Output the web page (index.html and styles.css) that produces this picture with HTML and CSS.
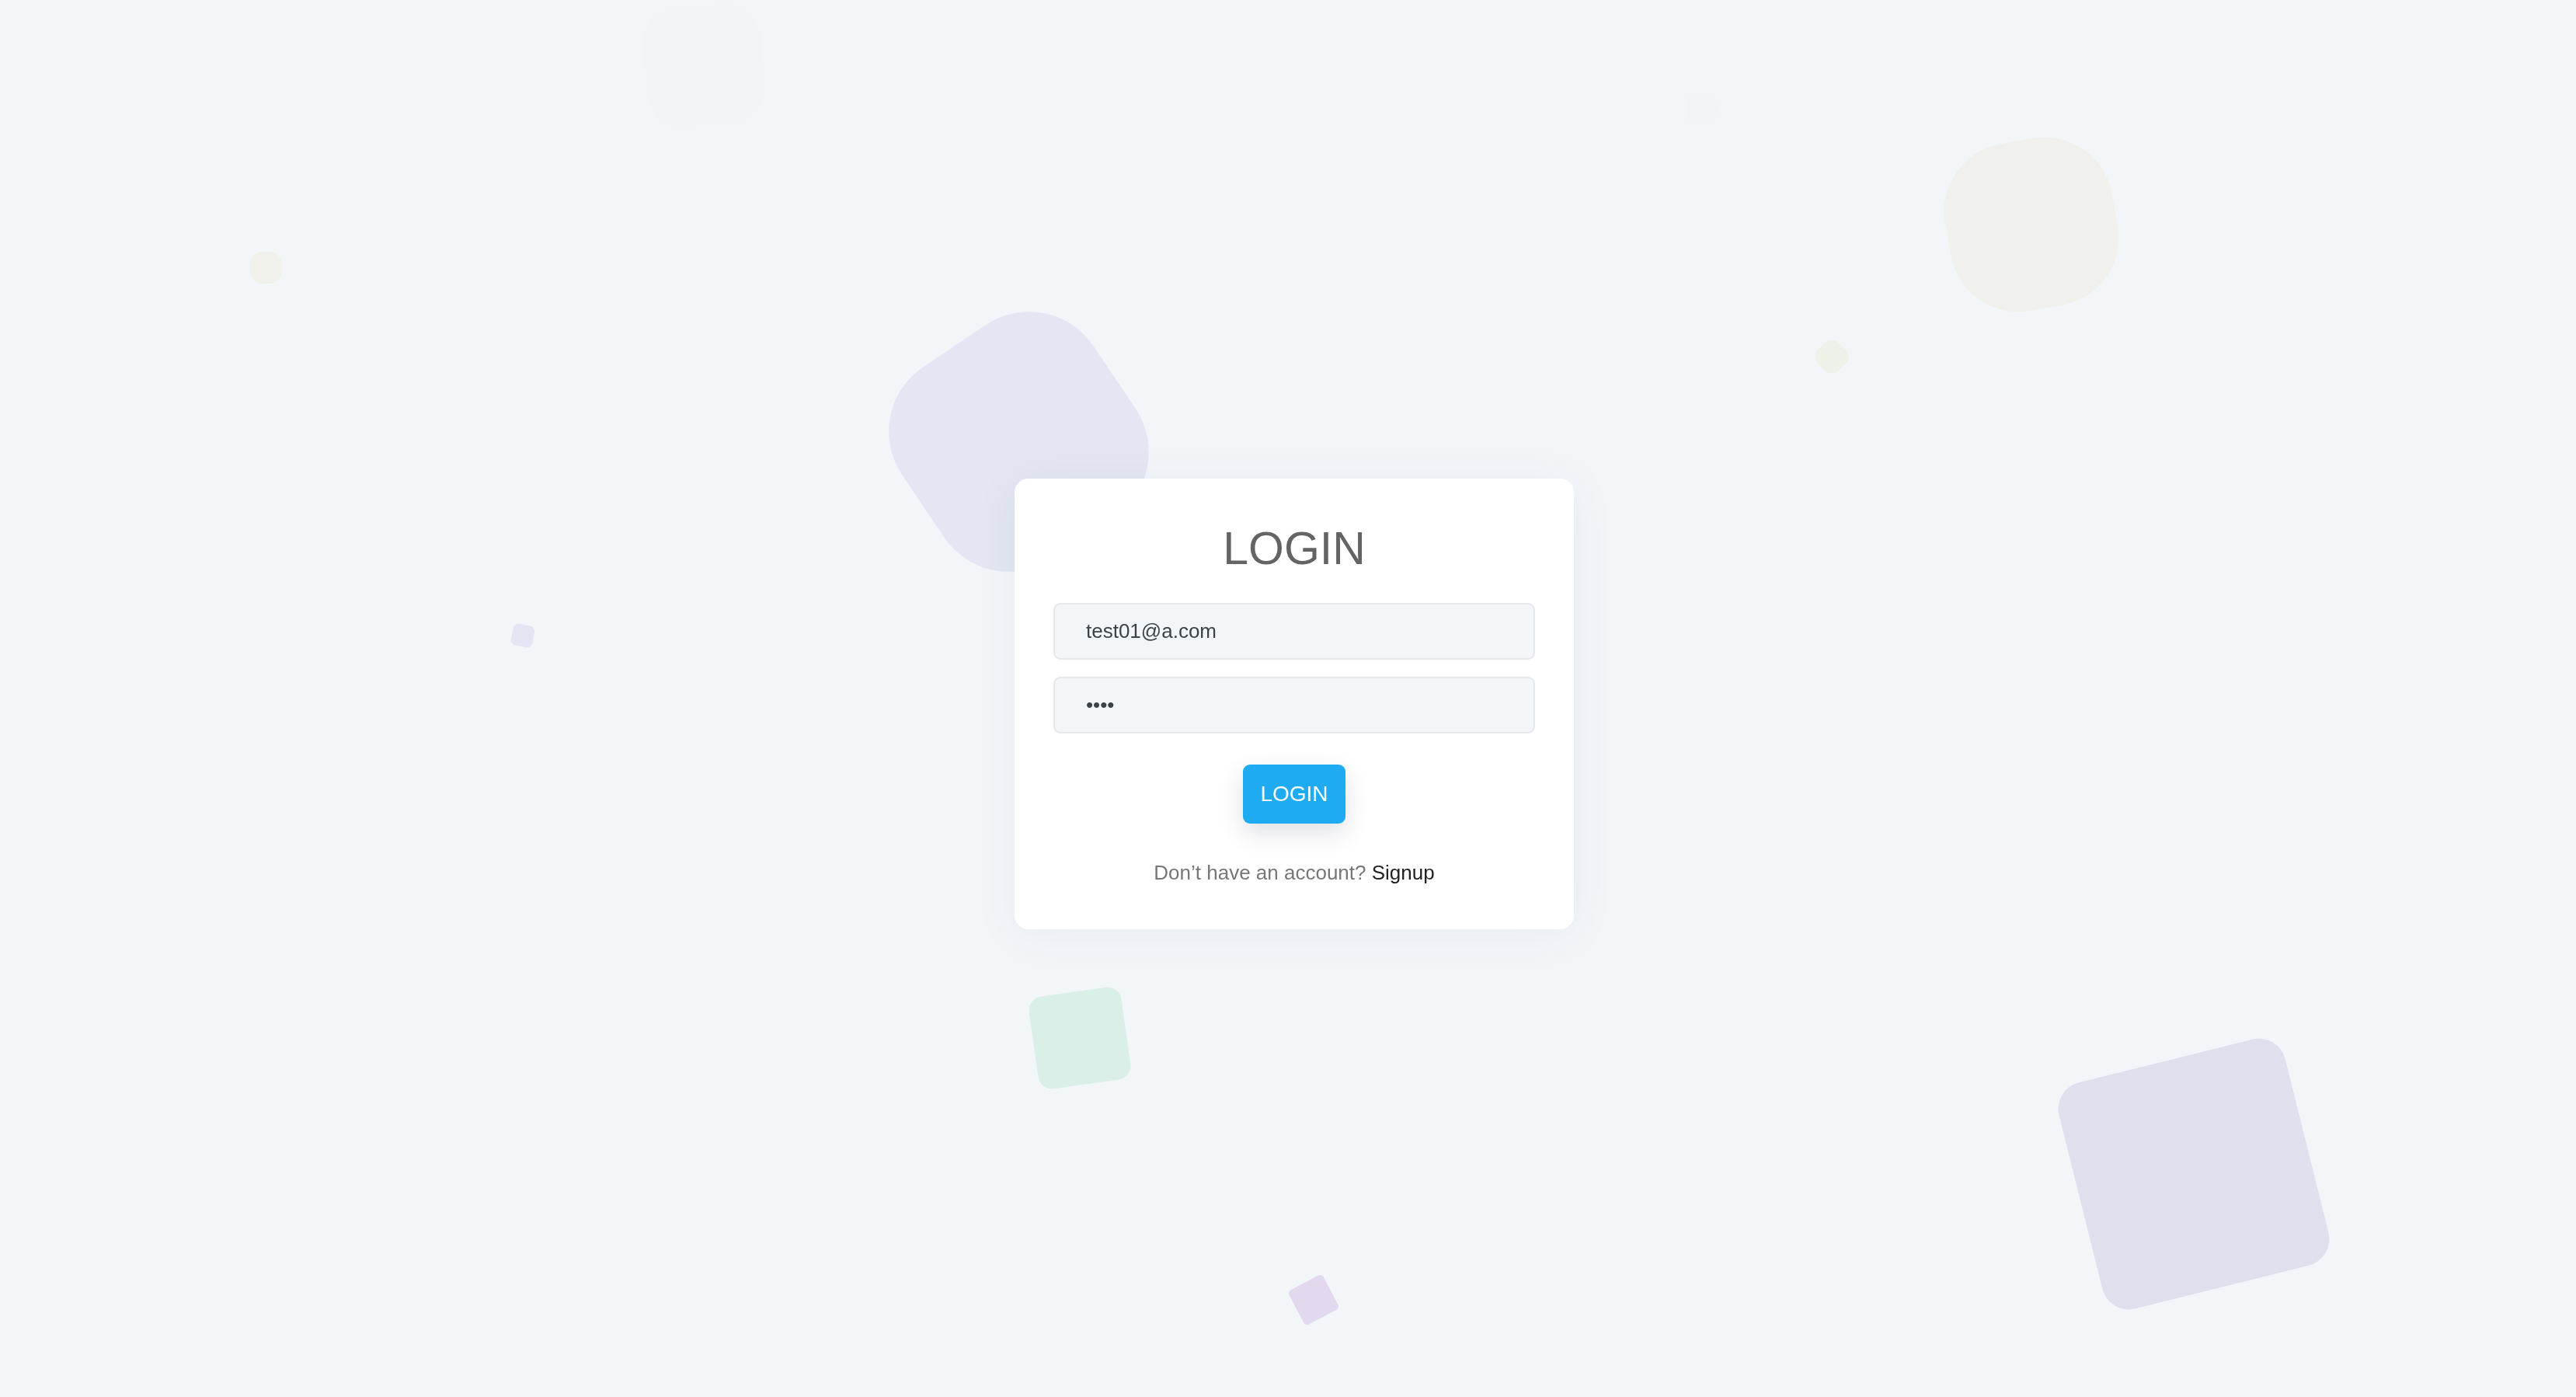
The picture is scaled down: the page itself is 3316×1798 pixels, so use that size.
FILE: index.html
```html
<!DOCTYPE html>
<html lang="en">
<head>
<meta charset="utf-8">
<title>Login</title>
<link rel="stylesheet" href="styles.css">
</head>
<body>
<div class="backdrop" aria-hidden="true">
  <span class="shape shape-faint-top"></span>
  <span class="shape shape-faint-right"></span>
  <span class="shape shape-beige-left"></span>
  <span class="shape shape-lav-small"></span>
  <span class="shape shape-lav-big"></span>
  <span class="shape shape-beige-big"></span>
  <span class="shape shape-beige-dot"></span>
  <span class="shape shape-green"></span>
  <span class="shape shape-purple"></span>
  <span class="shape shape-lav-corner"></span>
</div>
<main class="stage">
  <section class="card">
    <h1 class="card-title">LOGIN</h1>
    <form class="login-form" onsubmit="return false;">
      <input class="field" type="email" value="test01@a.com" aria-label="Email">
      <input class="field" type="password" value="1234" aria-label="Password">
      <button class="btn-login" type="submit">LOGIN</button>
    </form>
    <p class="signup-line">Don’t have an account? <a class="signup-link" href="#">Signup</a></p>
  </section>
</main>
</body>
</html>
```
FILE: styles.css
```css
* {
  box-sizing: border-box;
}

html, body {
  margin: 0;
  padding: 0;
}

body {
  background: #f3f6f9;
  font-family: "Liberation Sans", Arial, Helvetica, sans-serif;
  min-height: 100vh;
  overflow: hidden;
}

/* decorative floating shapes (free canvas) */
.backdrop {
  position: fixed;
  inset: 0;
  z-index: 0;
  pointer-events: none;
}

.shape {
  position: absolute;
  display: block;
}

.shape-faint-top {
  left: 830px;
  top: 8px;
  width: 152px;
  height: 152px;
  border-radius: 44px;
  background: #f2f5f7;
  transform: rotate(-5deg);
}

.shape-faint-right {
  left: 2170px;
  top: 120px;
  width: 40px;
  height: 40px;
  border-radius: 14px;
  background: #f2f5f7;
}

.shape-beige-left {
  left: 322px;
  top: 324px;
  width: 41px;
  height: 41px;
  border-radius: 16px;
  background: #eff1ea;
}

.shape-lav-small {
  left: 659px;
  top: 804px;
  width: 28px;
  height: 28px;
  border-radius: 7px;
  background: #e4e4f2;
  transform: rotate(12deg);
}

.shape-lav-big {
  left: 1163px;
  top: 420px;
  width: 297px;
  height: 297px;
  border-radius: 100px;
  background: #e4e6f3;
  transform: rotate(-34deg);
}

.shape-beige-big {
  left: 2506px;
  top: 180px;
  width: 218px;
  height: 218px;
  border-radius: 88px;
  background: #f0f1ec;
  transform: rotate(-10deg);
}

.shape-beige-dot {
  left: 2339px;
  top: 440px;
  width: 38px;
  height: 38px;
  border-radius: 13px;
  background: #edf1e8;
  transform: rotate(45deg);
}

.shape-green {
  left: 1330px;
  top: 1276px;
  width: 120px;
  height: 120px;
  border-radius: 18px;
  background: #dbefe9;
  transform: rotate(-8deg);
}

.shape-purple {
  left: 1666px;
  top: 1648px;
  width: 50px;
  height: 50px;
  border-radius: 5px;
  background: #e2d9ef;
  transform: rotate(-28deg);
}

.shape-lav-corner {
  left: 2674px;
  top: 1361px;
  width: 300px;
  height: 300px;
  border-radius: 35px;
  background: #e0dfee;
  transform: rotate(-14deg);
}

/* layout */
.stage {
  position: relative;
  z-index: 1;
  min-height: 100vh;
  padding: 14px 0 0 16px;
  display: flex;
  align-items: center;
  justify-content: center;
}

.card {
  width: 720px;
  background: #ffffff;
  border-radius: 18px;
  padding: 55px 50px 58px;
  box-shadow: 0 6px 60px rgba(40, 50, 90, 0.06);
  display: flex;
  flex-direction: column;
  align-items: stretch;
}

.card-title {
  margin: 0;
  text-align: center;
  font-size: 59px;
  line-height: 70px;
  font-weight: 400;
  color: #646464;
}

.login-form {
  margin-top: 35px;
  display: flex;
  flex-direction: column;
  gap: 22px;
}

.field {
  display: block;
  width: 100%;
  height: 73px;
  margin: 0;
  padding: 0 20px 0 40px;
  border: 2px solid #e5e7ea;
  border-radius: 9px;
  background: #f3f6f9;
  font-family: "Liberation Sans", Arial, Helvetica, sans-serif;
  font-size: 26px;
  color: #3d4248;
  outline: none;
}

.btn-login {
  align-self: center;
  margin-top: 18px;
  width: 132px;
  height: 76px;
  border: none;
  border-radius: 9px;
  background: #1fabf1;
  color: #ffffff;
  font-family: "Liberation Sans", Arial, Helvetica, sans-serif;
  font-size: 28px;
  font-weight: 400;
  letter-spacing: 0;
  box-shadow: 0 12px 30px rgba(50, 55, 90, 0.15);
  cursor: pointer;
}

.signup-line {
  margin: 48px 0 0;
  text-align: center;
  font-size: 26px;
  line-height: 30px;
  color: #777777;
}

.signup-link {
  color: #222222;
  text-decoration: none;
}
```
